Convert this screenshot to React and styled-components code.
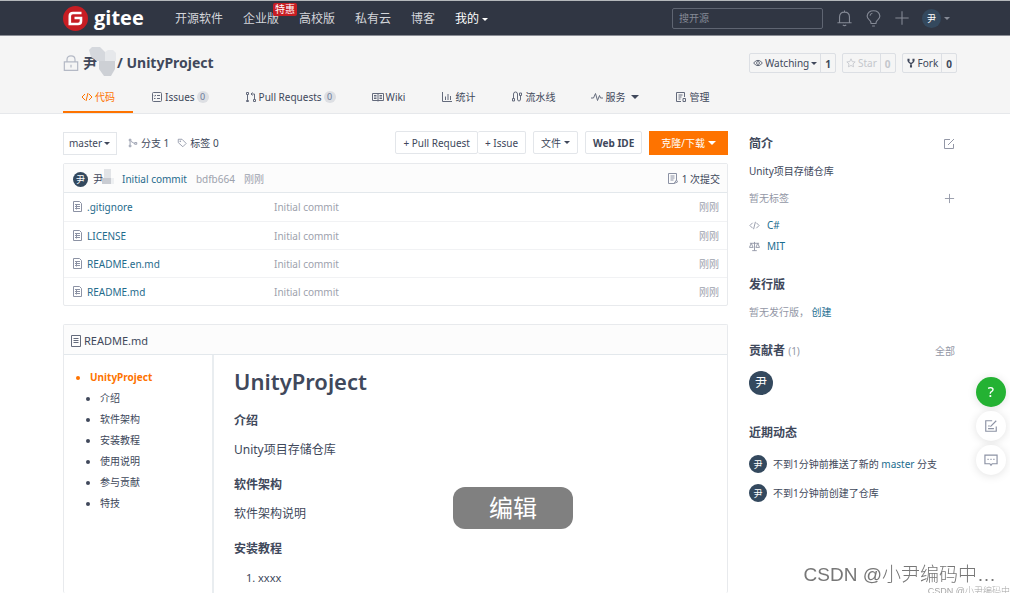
import React from "react";
import styled, { createGlobalStyle } from "styled-components";

const GlobalStyle = createGlobalStyle`
  *, *::before, *::after {
    box-sizing: border-box;
  }

  body {
    margin: 0;
    background: #fff;
    color: #40485b;
    font-family: "Noto Sans", "Noto Sans CJK SC", sans-serif;
    font-size: 10px;
    line-height: 20px;
  }

  h1, h2, h3, p, ul, ol {
    margin: 0;
    padding: 0;
  }

  button, input, select {
    font: inherit;
    color: inherit;
  }

  a {
    color: inherit;
    text-decoration: none;
  }
`;

const Page = styled.div`
  display: flex;
  flex-direction: column;
  height: 100vh;
  overflow: hidden;
`;

const Container = styled.div`
  width: 100%;
  padding: 0 53px 0 63px;
`;

const Svg = styled.svg`
  flex: none;
  display: block;
  fill: none;
  stroke: currentColor;
  stroke-width: ${(p) => p.$stroke || 1};
`;

/* ---------- top bar ---------- */

const TopBar = styled.header`
  flex: none;
  height: 36px;
  background: #303643;
  border-top: 1px solid #b4b8bb;
  border-bottom: 1px solid #8a8d95;
  color: #d3d5da;
`;

const TopInner = styled(Container)`
  display: flex;
  align-items: center;
  height: 34px;
`;

const Logo = styled.a`
  display: flex;
  align-items: center;
  gap: 6px;
  width: 112px;
  color: #fff;
  font-family: "Open Sans", "Noto Sans", sans-serif;
  font-size: 20px;
  font-weight: 700;
  line-height: 28px;
`;

const TopNav = styled.nav`
  display: flex;
  gap: 20px;
  padding-top: 2px;
  font-size: 12px;
`;

const TopLink = styled.a`
  display: flex;
  align-items: center;
  gap: 3px;
  position: relative;
  white-space: nowrap;
  color: ${(p) => (p.$active ? "#fff" : "#d3d5da")};
`;

const Promo = styled.span`
  position: absolute;
  top: -6px;
  right: -18px;
  padding: 0 2px;
  border-radius: 2px;
  background: #c71d23;
  color: #fff;
  font-size: 10px;
  line-height: 13px;
`;

const TopTools = styled.div`
  display: flex;
  align-items: center;
  gap: 12px;
  margin-left: auto;
  padding-right: 7px;
  color: #858a96;
`;

const Search = styled.input`
  width: 151px;
  height: 21px;
  margin-right: 1px;
  padding: 0 6px;
  border: 1px solid #5f6572;
  border-radius: 2px;
  background: transparent;
  outline: none;

  &::placeholder {
    color: #858a96;
    opacity: 1;
  }
`;

const PlainButton = styled.button`
  display: flex;
  align-items: center;
  gap: 3px;
  padding: 0;
  border: 0;
  background: none;
  cursor: pointer;
`;

const Avatar = styled.span`
  flex: none;
  display: flex;
  align-items: center;
  justify-content: center;
  width: ${(p) => p.$size}px;
  height: ${(p) => p.$size}px;
  border-radius: 50%;
  background: #34495e;
  color: #fff;
  font-size: ${(p) => (p.$size > 20 ? 12 : 9)}px;
  line-height: 1;
`;

const Caret = styled.span`
  flex: none;
  border: ${(p) => p.$size || 3}px solid transparent;
  border-top-color: currentColor;
  border-bottom: 0;
`;

/* ---------- repo header ---------- */

const RepoHeader = styled.div`
  flex: none;
  background: #f5f5f5;
  border-bottom: 1px solid #e6e8eb;
`;

const TitleRow = styled(Container)`
  display: flex;
  align-items: center;
  justify-content: space-between;
  height: 46px;
  padding-top: 8px;
`;

const RepoTitle = styled.h1`
  display: flex;
  align-items: center;
  gap: 4px;
  color: #40485b;
  font-size: 14px;
  font-weight: 700;
`;

const LockMark = styled.span`
  color: #b4b9c5;
`;

const Masked = styled.span`
  display: inline-block;
  position: relative;
  width: ${(p) => p.$width}px;
`;

const Mosaic = styled.svg`
  position: absolute;
  top: ${(p) => p.$top}px;
  left: ${(p) => p.$left}px;
`;

const RepoActions = styled.div`
  display: flex;
  gap: 6px;
`;

const ActionGroup = styled.div`
  display: flex;
  height: 20px;
  border: 1px solid #dcdfe4;
  border-radius: 2px;
  color: ${(p) => (p.$muted ? "#c4c7cc" : "#40485b")};
`;

const ActionButton = styled(PlainButton)`
  gap: 2px;
  padding: 0 3px;
`;

const ActionCount = styled.a`
  padding: 0 4px;
  border-left: 1px solid #dcdfe4;
  font-weight: 700;
`;

const Tabs = styled.nav`
  display: flex;
  height: 31px;
`;

const Tab = styled.a`
  display: flex;
  align-items: center;
  gap: 2px;
  padding: 0 18px;
  border-bottom: 2px solid ${(p) => (p.$active ? "#fe7300" : "transparent")};
  color: ${(p) => (p.$active ? "#fe7300" : "#40485b")};
  white-space: nowrap;

  svg {
    color: ${(p) => (p.$active ? "#fe7300" : "#646b7c")};
  }

  ${Caret} {
    margin-left: 4px;
  }
`;

const Count = styled.span`
  min-width: 12px;
  border-radius: 6px;
  background: #dddfe3;
  color: #6b7a99;
  font-size: 9px;
  line-height: 12px;
  text-align: center;
`;

/* ---------- main column ---------- */

const Body = styled(Container)`
  flex: 1;
  display: grid;
  grid-template-columns: minmax(0, 1fr) 208px;
  gap: 21px;
  min-height: 0;
`;

const Main = styled.main`
  display: flex;
  flex-direction: column;
  min-height: 0;
  padding-top: 17px;
`;

const Toolbar = styled.div`
  flex: none;
  display: flex;
  align-items: center;
  height: 24px;
  margin-bottom: 8px;
`;

const BranchPicker = styled.label`
  display: flex;
  align-items: center;
  position: relative;
  width: 54px;
  height: 23px;
  margin-right: 11px;
  border: 1px solid #e3e6ea;

  ${Caret} {
    position: absolute;
    right: 6px;
    pointer-events: none;
  }
`;

const BranchSelect = styled.select`
  appearance: none;
  width: 100%;
  padding: 0 5px;
  border: 0;
  background: transparent;
  outline: none;
`;

const RefLink = styled.a`
  display: flex;
  align-items: center;
  gap: 3px;
  margin-right: 8px;
  white-space: nowrap;

  svg {
    color: #8c92a4;
  }
`;

const ToolGroup = styled.div`
  display: flex;
  gap: 7px;
  margin-left: auto;
`;

const Joined = styled.div`
  display: flex;

  button + button {
    border-left: 0;
  }
`;

const ToolButton = styled.button`
  display: flex;
  align-items: center;
  justify-content: center;
  gap: 3px;
  height: ${(p) => (p.$primary ? 24 : 23)}px;
  padding: 0 ${(p) => (p.$primary ? 11 : 7)}px;
  border: 1px solid ${(p) => (p.$primary ? "#fe7300" : "#e3e6ea")};
  border-radius: ${(p) => (p.$primary ? 0 : 2)}px;
  background: ${(p) => (p.$primary ? "#fe7300" : "#fff")};
  color: ${(p) => (p.$primary ? "#fff" : "#40485b")};
  font-weight: ${(p) => (p.$bold ? 700 : 400)};
  white-space: nowrap;
  cursor: pointer;
`;

const Card = styled.section`
  flex: none;
  border: 1px solid #e8eaed;
  border-radius: 2px;
`;

const CommitBar = styled.div`
  display: flex;
  align-items: center;
  gap: 9px;
  height: 29px;
  padding: 2px 7px 0 9px;
  border-bottom: 1px solid #e3e8ec;
  background: #fcfcfc;
`;

const Committer = styled.span`
  display: flex;
  align-items: center;
  gap: 5px;
`;

const CommitText = styled.a`
  color: ${(p) => (p.$link ? "#1f6b8c" : "#9da2ad")};
`;

const CommitTotal = styled.a`
  display: flex;
  align-items: center;
  gap: 3px;
  margin-left: auto;

  svg {
    color: #8c92a4;
  }
`;

const FileTable = styled.table`
  width: 100%;
  border-collapse: collapse;
  table-layout: fixed;
  color: #9da2ad;

  tr + tr td {
    border-top: 1px solid #f1f2f4;
  }

  td {
    height: 28px;
    padding: 1px 8px 0;
  }

  td:first-child {
    width: 202px;
  }

  td:last-child {
    width: 80px;
    text-align: right;
  }
`;

const FileLink = styled.a`
  display: flex;
  align-items: center;
  gap: 3px;
  color: #1f6b8c;

  svg {
    color: #8c92a4;
  }
`;

const ReadmeCard = styled(Card)`
  flex: 1;
  display: flex;
  flex-direction: column;
  min-height: 0;
  margin-top: 18px;
  border-bottom: 0;
`;

const ReadmeHead = styled.div`
  flex: none;
  display: flex;
  align-items: center;
  gap: 2px;
  height: 30px;
  padding: 2px 6px 0;
  border-bottom: 1px solid #e3e8ec;
  background: #fcfcfc;
  font-size: 11px;

  svg {
    color: #646b7c;
  }
`;

const ReadmeBody = styled.div`
  flex: 1;
  display: grid;
  grid-template-columns: 150px minmax(0, 1fr);
  min-height: 0;
`;

const Toc = styled.ul`
  padding: 12px 0 0 26px;
  border-right: 2px solid #e9edf0;
  color: #fe7300;
  font-weight: 700;
  line-height: 21px;

  ul {
    padding-left: 10px;
    color: #40485b;
    font-weight: 400;
    list-style: disc;
  }
`;

const Article = styled.article`
  padding: 11px 20px 0;
  font-size: 12px;

  h1 {
    margin-bottom: 15px;
    font-size: 22px;
    font-weight: 600;
    line-height: 30px;
  }

  h2 {
    margin-bottom: 9px;
    font-size: 12px;
    font-weight: 700;
  }

  p {
    margin-bottom: 15px;
  }

  ol {
    padding-left: 24px;
    font-size: 11px;
  }
`;

/* ---------- sidebar ---------- */

const Side = styled.aside`
  display: flex;
  flex-direction: column;
  gap: 19px;
  padding: 20px 2px 0 0;
`;

const SideSection = styled.section`
  display: flex;
  flex-direction: column;
  gap: 7px;
`;

const SideRow = styled.div`
  display: flex;
  align-items: center;
  justify-content: space-between;
  color: #9397a6;
`;

const SideTitle = styled.h2`
  color: #40485b;
  font-size: 12px;
  font-weight: 700;

  span {
    color: #9397a6;
    font-size: 10px;
    font-weight: 400;
  }
`;

const MetaList = styled.ul`
  display: grid;
  row-gap: 1px;
  list-style: none;
`;

const MetaItem = styled.li`
  display: flex;
  align-items: center;
  gap: 7px;
  color: #9397a6;
`;

const TextLink = styled.a`
  color: #1b6d8f;
`;

const Contributors = styled.div`
  display: flex;
  padding: 3px 0 9px;
`;

const Events = styled.ul`
  display: grid;
  gap: 9px;
  padding-top: 4px;
  list-style: none;
`;

const EventItem = styled.li`
  display: flex;
  align-items: center;
  gap: 6px;
  white-space: nowrap;
`;

/* ---------- floating parts ---------- */

const FloatTools = styled.div`
  position: fixed;
  top: 377px;
  right: 4px;
  display: flex;
  flex-direction: column;
  align-items: center;
  gap: 4px;
`;

const FloatButton = styled.button`
  display: flex;
  align-items: center;
  justify-content: center;
  width: 30px;
  height: 30px;
  padding: 0;
  border: 0;
  border-radius: 50%;
  background: ${(p) => (p.$help ? "#24b233" : "#fff")};
  color: ${(p) => (p.$help ? "#fff" : "#8c92a4")};
  box-shadow: 0 1px 10px rgba(0, 0, 0, 0.12);
  font-size: 14px;
  font-weight: 500;
  cursor: pointer;
`;

const EditButton = styled.button`
  position: fixed;
  bottom: 64px;
  left: calc(50% - 52px);
  width: 120px;
  height: 42px;
  padding: 0;
  border: 0;
  border-radius: 12px;
  background: #808080;
  color: #fff;
  font-size: 24px;
  line-height: 42px;
`;

const Watermark = styled.div`
  position: fixed;
  right: ${(p) => (p.$small ? 0 : 14)}px;
  bottom: ${(p) => (p.$small ? -5 : 4)}px;
  color: ${(p) => (p.$small ? "#a5a5a5" : "#777")};
  font-family: "Liberation Sans", "Noto Sans CJK SC", sans-serif;
  font-size: ${(p) => (p.$small ? 9 : 19)}px;
  font-weight: 300;
  line-height: ${(p) => (p.$small ? 14 : 28)}px;
  white-space: nowrap;
  pointer-events: none;
`;

/* ---------- icons ---------- */

const paths = {
  code: "M4 3 1 6l3 3M8 3l3 3-3 3M7 2 5 10",
  issues: "M2.5 1.5h7q1 0 1 1v7q0 1-1 1h-7q-1 0-1-1v-7q0-1 1-1zM3 4.5l.7.7L5 4M3 7.5h1.5M6 4.5h3M6 7.5h3",
  pull: "M2.5 4v6M1.5 1.5h2v2h-2zM1.5 9.5h2v1h-2zM9.5 8V3H6M7.5 1.5 6 3l1.5 1.5M8.5 8.5h2v2h-2z",
  wiki: "M.5 2.5h11v7H.5zM6 2.5v8M2 4.5h2.5M2 6h2.5M2 7.5h2.5M7.5 4.5H10M7.5 6H10M7.5 7.5H10",
  stats: "M1.5 1v9.5H11M4.5 9V5.5M7 9V3M9.5 9V5",
  pipe: "M2.5 7.5V3q0-2 2-2t2 2v5q0 2 1.5 2T9.5 8V4.5M1.5 7.5h2V10h-2zM8.5 2h2v2.5h-2z",
  pulse: "M0 7h2.5l2-4.5 2 7 2-5 1 2.5H12",
  manage: "M6 10.5H1.5v-9h8V6M3.5 4h4M3.5 6h3M3.5 8h2M8 7.5h2.5v3H8z",
  branch: "M2.5 4v4M1.5 1.5h2v2h-2zM1.5 8.5h2v2h-2zM3.5 4l4 2.5M8 5.5h2.5v2H8z",
  tag: "M1.5 1.5H6l5 5-4 4-5.5-5zM3.5 3.5h.8v.8h-.8z",
  file: "M1.5.5h6l2 2v8h-8zM3 3.5h5M3 5.5h5M3 7.5h5M4.5 3.5v5",
  readme: "M1.5.5h9v11h-9zM3.5 3.5h5M3.5 5.5h5M3.5 7.5h5",
  history: "M7 10.5H1.5V.5h8V7M3.5 3h4M3.5 5h4M3.5 7h3M7 10.5 9.5 7l1 2z",
  eye: "M.8 6Q3 2.8 6 2.8T11.2 6Q9 9.2 6 9.2T.8 6zM6 4.3a1.7 1.7 0 1 0 .01 0z",
  star: "M6 1l1.5 3.3 3.5.4-2.6 2.4.7 3.5L6 8.9l-3.1 1.7.7-3.5L1 4.7l3.5-.4z",
  fork: "M2.5 1.5h1V3h-1zM8.5 1.5h1V3h-1zM3 3v1.5L6 7l3-2.5V3M6 7v3M5.5 9.500h1v1h-1z",
  edit: "M7 1.5H1.5v9h9V6M5 7l6-6",
  editLines: "M7 1.5H1.5v9h9v-4M5.5 6.5l5-5M3.5 6H5M3.5 8.3h5",
  plus: "M6 1v10M1 6h10",
  scale: "M6 1v9.5M3.5 10.5h5M1 2.5h10M2.5 2.5.5 7h4zM9.5 2.5l-2 4.500h4z",
  chat: "M.8 1.8h10.4v7.400H7L6 10.5 5 9.200H.8zM3 5.5h1M5.5 5.5h1M8 5.5h1",
  lock: "M1 5.2h10v6.3H1zM3 5V3.5Q3 .7 6 .7T9 3.5V5M6 7.3v2",
  bell: "M2.5 9V5Q2.5 1.5 6 1.5T9.5 5v4M1 9h10M6 .3v1.2M4.8 10.5q1.2 1.2 2.4 0",
  bulb: "M4.3 9.5Q4.3 8 3 7 1.5 5.7 1.5 4.3 2 .5 6 .5t4.5 3.8Q10.5 5.7 9 7 7.7 8 7.7 9.5zM5 11.3h2M3.5 4q.4-1.5 1.7-1.7",
};

const Icon = ({ name, size = 12, stroke }) => (
  <Svg width={size} height={size} viewBox="0 0 12 12" $stroke={stroke} aria-hidden="true">
    <path d={paths[name]} />
  </Svg>
);

const LogoMark = () => (
  <svg width="25" height="25" viewBox="0 0 25 25" aria-hidden="true">
    <circle cx="12.5" cy="12.5" r="12.5" fill="#c71d23" />
    <path
      d="M18.5 7H10Q6.8 7 6.8 10v8H15q3 0 3-3v-3h-6.5"
      fill="none"
      stroke="#fff"
      strokeWidth="2.6"
    />
  </svg>
);

const tabs = [
  { icon: "code", label: "代码", active: true },
  { icon: "issues", label: "Issues", count: 0 },
  { icon: "pull", label: "Pull Requests", count: 0 },
  { icon: "wiki", label: "Wiki" },
  { icon: "stats", label: "统计" },
  { icon: "pipe", label: "流水线" },
  { icon: "pulse", label: "服务", menu: true },
  { icon: "manage", label: "管理" },
];

const files = [".gitignore", "LICENSE", "README.en.md", "README.md"];

const toc = ["介绍", "软件架构", "安装教程", "使用说明", "参与贡献", "特技"];

const App = () => (
  <Page>
    <GlobalStyle />

    <TopBar>
      <TopInner>
        <Logo href="#">
          <LogoMark />
          gitee
        </Logo>
        <TopNav>
          <TopLink href="#">开源软件</TopLink>
          <TopLink href="#">
            企业版
            <Promo>特惠</Promo>
          </TopLink>
          <TopLink href="#">高校版</TopLink>
          <TopLink href="#">私有云</TopLink>
          <TopLink href="#">博客</TopLink>
          <TopLink href="#" $active>
            我的
            <Caret />
          </TopLink>
        </TopNav>
        <TopTools>
          <Search type="search" placeholder="搜开源" aria-label="搜开源" />
          <PlainButton aria-label="通知">
            <Icon name="bell" size={17} stroke={0.8} />
          </PlainButton>
          <PlainButton aria-label="提示">
            <Icon name="bulb" size={17} stroke={0.8} />
          </PlainButton>
          <PlainButton aria-label="新建">
            <Icon name="plus" size={16} stroke={0.8} />
          </PlainButton>
          <PlainButton aria-label="账户">
            <Avatar $size={19}>尹</Avatar>
            <Caret />
          </PlainButton>
        </TopTools>
      </TopInner>
    </TopBar>

    <RepoHeader>
      <TitleRow>
        <RepoTitle>
          <LockMark>
            <Icon name="lock" size={16} stroke={0.9} />
          </LockMark>
          <Masked $width={30}>
            尹
            <Mosaic $top={-6} $left={6} width="27" height="29" viewBox="0 0 27 29" aria-hidden="true">
              <path d="M0 3 3 0h8l5 5v9H8L2 10z" fill="#d5d8dd" />
              <path d="M16 5 19 3h5l3 3v8H16z" fill="#e6e8eb" />
              <path d="M10 14h16v8l-4 7h-7l-5-7z" fill="#cdd0d5" />
            </Mosaic>
          </Masked>
          <span>/ UnityProject</span>
        </RepoTitle>
        <RepoActions>
          <ActionGroup>
            <ActionButton>
              <Icon name="eye" size={10} />
              Watching
              <Caret />
            </ActionButton>
            <ActionCount href="#">1</ActionCount>
          </ActionGroup>
          <ActionGroup $muted>
            <ActionButton>
              <Icon name="star" size={10} />
              Star
            </ActionButton>
            <ActionCount href="#">0</ActionCount>
          </ActionGroup>
          <ActionGroup>
            <ActionButton>
              <Icon name="fork" size={10} stroke={1.5} />
              Fork
            </ActionButton>
            <ActionCount href="#">0</ActionCount>
          </ActionGroup>
        </RepoActions>
      </TitleRow>
      <Container>
        <Tabs>
          {tabs.map((tab) => (
            <Tab key={tab.label} href="#" $active={tab.active}>
              <Icon name={tab.icon} />
              {tab.label}
              {tab.count !== undefined && <Count>{tab.count}</Count>}
              {tab.menu && <Caret $size={4} />}
            </Tab>
          ))}
        </Tabs>
      </Container>
    </RepoHeader>

    <Body>
      <Main>
        <Toolbar>
          <BranchPicker>
            <BranchSelect aria-label="分支" defaultValue="master">
              <option>master</option>
            </BranchSelect>
            <Caret />
          </BranchPicker>
          <RefLink href="#">
            <Icon name="branch" size={10} />
            分支 1
          </RefLink>
          <RefLink href="#">
            <Icon name="tag" size={10} />
            标签 0
          </RefLink>
          <ToolGroup>
            <Joined>
              <ToolButton>+ Pull Request</ToolButton>
              <ToolButton>+ Issue</ToolButton>
            </Joined>
            <ToolButton>
              文件
              <Caret />
            </ToolButton>
            <ToolButton $bold>Web IDE</ToolButton>
            <ToolButton $primary>
              克隆/下载
              <Caret $size={4} />
            </ToolButton>
          </ToolGroup>
        </Toolbar>

        <Card>
          <CommitBar>
            <Committer>
              <Avatar $size={15}>尹</Avatar>
              <Masked $width={20}>
                尹
                <Mosaic $top={0} $left={9} width="12" height="16" viewBox="0 0 12 16" aria-hidden="true">
                  <path d="M2 0h7v9H2z" fill="#e2e4e7" />
                  <path d="M0 9h9v6H0z" fill="#c9ccd2" />
                  <path d="M9 9h3v6H9z" fill="#eef0f2" />
                </Mosaic>
              </Masked>
            </Committer>
            <CommitText href="#" $link>
              Initial commit
            </CommitText>
            <CommitText href="#">bdfb664</CommitText>
            <CommitText as="span">刚刚</CommitText>
            <CommitTotal href="#">
              <Icon name="history" />
              1 次提交
            </CommitTotal>
          </CommitBar>
          <FileTable>
            <tbody>
              {files.map((file) => (
                <tr key={file}>
                  <td>
                    <FileLink href="#">
                      <Icon name="file" />
                      {file}
                    </FileLink>
                  </td>
                  <td>Initial commit</td>
                  <td>刚刚</td>
                </tr>
              ))}
            </tbody>
          </FileTable>
        </Card>

        <ReadmeCard>
          <ReadmeHead>
            <Icon name="readme" />
            README.md
          </ReadmeHead>
          <ReadmeBody>
            <Toc>
              <li>
                <a href="#">UnityProject</a>
                <ul>
                  {toc.map((item) => (
                    <li key={item}>
                      <a href="#">{item}</a>
                    </li>
                  ))}
                </ul>
              </li>
            </Toc>
            <Article>
              <h1>UnityProject</h1>
              <h2>介绍</h2>
              <p>Unity项目存储仓库</p>
              <h2>软件架构</h2>
              <p>软件架构说明</p>
              <h2>安装教程</h2>
              <ol>
                <li>xxxx</li>
              </ol>
            </Article>
          </ReadmeBody>
        </ReadmeCard>
      </Main>

      <Side>
        <SideSection>
          <SideRow>
            <SideTitle>简介</SideTitle>
            <PlainButton aria-label="编辑简介">
              <Icon name="edit" />
            </PlainButton>
          </SideRow>
          <p>Unity项目存储仓库</p>
          <SideRow>
            暂无标签
            <PlainButton aria-label="添加标签">
              <Icon name="plus" size={11} />
            </PlainButton>
          </SideRow>
          <MetaList>
            <MetaItem>
              <Icon name="code" size={11} />
              <TextLink href="#">C#</TextLink>
            </MetaItem>
            <MetaItem>
              <Icon name="scale" size={11} />
              <TextLink href="#">MIT</TextLink>
            </MetaItem>
          </MetaList>
        </SideSection>

        <SideSection>
          <SideTitle>发行版</SideTitle>
          <SideRow as="p">
            <span>
              暂无发行版， <TextLink href="#">创建</TextLink>
            </span>
          </SideRow>
        </SideSection>

        <SideSection>
          <SideRow>
            <SideTitle>
              贡献者 <span>(1)</span>
            </SideTitle>
            <a href="#">全部</a>
          </SideRow>
          <Contributors>
            <Avatar $size={24}>尹</Avatar>
          </Contributors>
        </SideSection>

        <SideSection>
          <SideTitle>近期动态</SideTitle>
          <Events>
            <EventItem>
              <Avatar $size={18}>尹</Avatar>
              <span>
                不到1分钟前推送了新的 <TextLink href="#">master</TextLink> 分支
              </span>
            </EventItem>
            <EventItem>
              <Avatar $size={18}>尹</Avatar>
              <span>不到1分钟前创建了仓库</span>
            </EventItem>
          </Events>
        </SideSection>
      </Side>
    </Body>

    <EditButton>编辑</EditButton>

    <FloatTools>
      <FloatButton $help>?</FloatButton>
      <FloatButton aria-label="反馈">
        <Icon name="editLines" size={14} />
      </FloatButton>
      <FloatButton aria-label="评论">
        <Icon name="chat" size={14} />
      </FloatButton>
    </FloatTools>

    <Watermark>CSDN @小尹编码中…</Watermark>
    <Watermark $small>CSDN @小尹编码中</Watermark>
  </Page>
);

export default App;
